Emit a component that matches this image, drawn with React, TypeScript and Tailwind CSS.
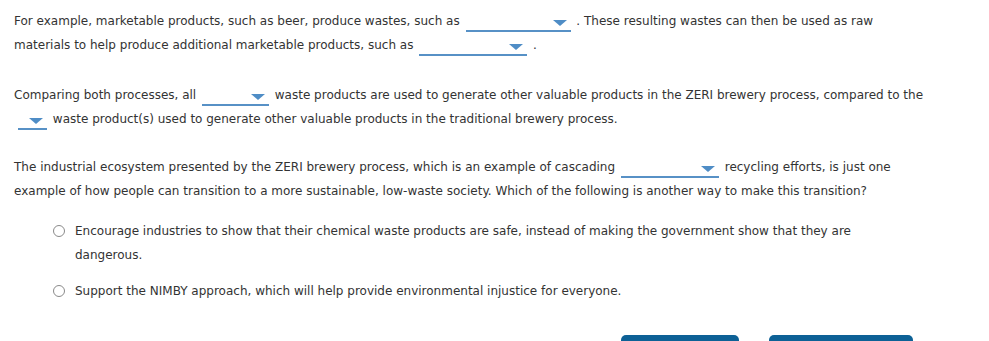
import React from 'react';

const Drop = ({ w, className = '' }: { w: number; className?: string }) => (
    <span
        className={`relative mx-0.5 inline-block h-[14px] border-b-2 border-[#5791c6] align-[-7px] ${className}`}
        style={{ width: w }}
    >
        <svg className="absolute right-[4px] top-[2px]" width="14" height="6" viewBox="0 0 14 6">
            <polygon points="0,0 14,0 7,6" fill="#4f8dc6" />
        </svg>
    </span>
);

const Radio = ({ children }: { children: React.ReactNode }) => (
    <div className="flex items-start gap-[10px] pl-[53px]">
        <span className="mt-[6px] h-[12px] w-[12px] shrink-0 rounded-full border border-[#8a8a8a] bg-white" />
        <span>{children}</span>
    </div>
);

export default function App() {
    return (
        <div className="h-[341px] w-[989px] overflow-hidden bg-white font-['DejaVu_Sans',sans-serif] text-[12px] leading-[24px] text-[#333333]">
            <div className="pl-[14px] pt-[9px]">
                <p>
                    For example, marketable products, such as beer, produce wastes, such as <Drop w={105} /> . These resulting wastes can then be used as raw
                    <br />
                    materials to help produce additional marketable products, such as <Drop w={108} /> .
                </p>

                <p className="mt-[26px]">
                    Comparing both processes, all <Drop w={67} /> waste products are used to generate other valuable products in the ZERI brewery process, compared to the
                    <br />
                    <Drop w={29} className="ml-[4px]" /> waste product(s) used to generate other valuable products in the traditional brewery process.
                </p>

                <p className="mt-[24px]">
                    The industrial ecosystem presented by the ZERI brewery process, which is an example of cascading <Drop w={98} /> recycling efforts, is just one
                    <br />
                    example of how people can transition to a more sustainable, low-waste society. Which of the following is another way to make this transition?
                </p>
            </div>

            <div className="mt-[16px] space-y-[12px]">
                <Radio>
                    Encourage industries to show that their chemical waste products are safe, instead of making the government show that they are
                    <br />
                    dangerous.
                </Radio>
                <Radio>Support the NIMBY approach, which will help provide environmental injustice for everyone.</Radio>
            </div>

            <div className="mt-[32px] flex justify-end gap-[30px] pr-[76px]">
                <button type="button" className="h-[36px] w-[118px] rounded-[5px] bg-[#0d6196]" />
                <button type="button" className="h-[36px] w-[144px] rounded-[5px] bg-[#0d6196]" />
            </div>
        </div>
    );
}
